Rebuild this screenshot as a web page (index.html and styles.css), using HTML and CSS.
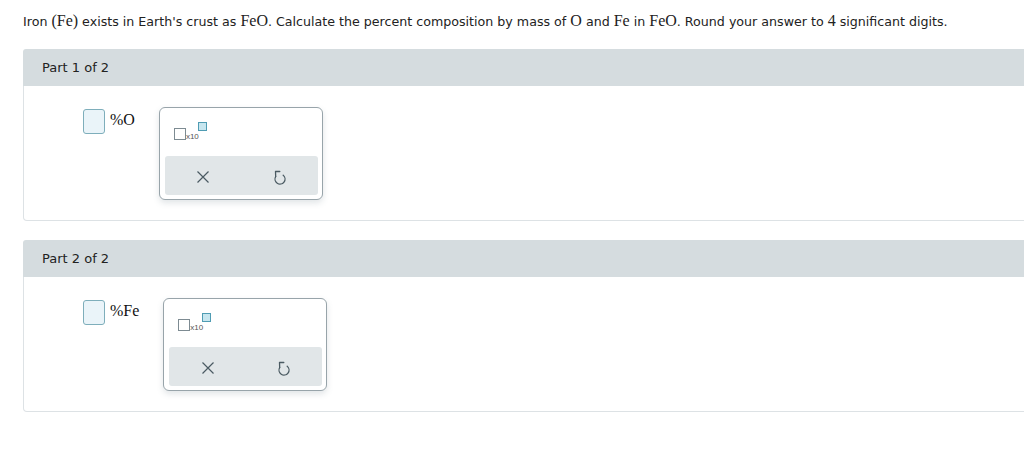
FILE: index.html
```html
<!DOCTYPE html>
<html>
<head>
<meta charset="utf-8">
<link rel="stylesheet" href="styles.css">
</head>
<body>
<p class="question">Iron <span class="m">(Fe)</span> exists in Earth's crust as <span class="m">FeO</span>. Calculate the percent composition by mass of <span class="m">O</span> and <span class="m">Fe</span> in <span class="m">FeO</span>. Round your answer to <span class="m">4</span> significant digits.</p>

<section class="part">
  <div class="part-head">Part 1 of 2</div>
  <div class="part-body">
    <div class="answer">
      <span class="box"></span>
      <span class="unit">%O</span>
    </div>
    <div class="pad">
      <div class="pad-tools">
        <span class="sq"></span><span class="x10">x10</span><span class="sup"></span>
      </div>
      <div class="pad-bar">
        <svg class="ic" width="14" height="14" viewBox="0 0 14 14"><path d="M1.5 1.5 L12.5 12.5 M12.5 1.5 L1.5 12.5" stroke="#4a5a62" stroke-width="1.2" fill="none"/></svg>
        <svg class="ic" width="14" height="16" viewBox="0 0 14 16"><path d="M2.7 7.5 A5 5 0 1 0 10.2 6.2" stroke="#4a5a62" stroke-width="1.3" fill="none" stroke-linecap="round"/><path d="M2.7 7.5 L2.5 2.5 L6.8 2.5" stroke="#4a5a62" stroke-width="1.3" fill="none" stroke-linejoin="round" stroke-linecap="round"/></svg>
      </div>
    </div>
  </div>
</section>

<section class="part">
  <div class="part-head">Part 2 of 2</div>
  <div class="part-body">
    <div class="answer">
      <span class="box"></span>
      <span class="unit">%Fe</span>
    </div>
    <div class="pad">
      <div class="pad-tools">
        <span class="sq"></span><span class="x10">x10</span><span class="sup"></span>
      </div>
      <div class="pad-bar">
        <svg class="ic" width="14" height="14" viewBox="0 0 14 14"><path d="M1.5 1.5 L12.5 12.5 M12.5 1.5 L1.5 12.5" stroke="#4a5a62" stroke-width="1.2" fill="none"/></svg>
        <svg class="ic" width="14" height="16" viewBox="0 0 14 16"><path d="M2.7 7.5 A5 5 0 1 0 10.2 6.2" stroke="#4a5a62" stroke-width="1.3" fill="none" stroke-linecap="round"/><path d="M2.7 7.5 L2.5 2.5 L6.8 2.5" stroke="#4a5a62" stroke-width="1.3" fill="none" stroke-linejoin="round" stroke-linecap="round"/></svg>
      </div>
    </div>
  </div>
</section>
</body>
</html>
```
FILE: styles.css
```css
html, body {
  margin: 0;
  padding: 0;
  background: #fff;
  overflow: hidden;
}
body {
  font-family: "DejaVu Sans", Verdana, sans-serif;
  font-size: 13px;
  color: #222;
  padding: 0 0 0 23px;
  width: 1040px;
}
.question {
  margin: 0;
  padding-top: 11px;
  height: 49px;
  box-sizing: border-box;
  line-height: 20px;
  font-size: 12.65px;
}
.m {
  font-family: "Liberation Serif", "Times New Roman", serif;
  font-size: 16px;
}
.part {
  margin-bottom: 19px;
}
.part-head {
  background: #d5dcdf;
  height: 37px;
  line-height: 37px;
  padding-left: 19px;
  border-radius: 3px 0 0 0;
}
.part-body {
  border: 1px solid #dde2e5;
  border-top: none;
  border-radius: 0 0 0 4px;
  height: 135px;
  display: flex;
  align-items: flex-start;
  padding: 21px 0 0 59px;
  box-sizing: border-box;
}
.answer {
  display: flex;
  align-items: flex-start;
  margin-top: 2px;
}
.box {
  width: 20px;
  height: 23px;
  background: #eaf4f9;
  border: 1px solid #7eaebb;
  border-radius: 3px;
}
.unit {
  font-family: "Liberation Serif", "Times New Roman", serif;
  font-size: 16px;
  color: #111;
  margin-left: 5px;
  line-height: 22px;
}
.pad {
  margin-left: 24px;
  width: 164px;
  height: 93px;
  box-sizing: border-box;
  border: 1px solid #98a4aa;
  border-radius: 6px;
  background: #fff;
  box-shadow: 0 3px 6px rgba(90, 110, 120, 0.18);
  padding: 0 4px 4px 5px;
  display: flex;
  flex-direction: column;
}
.pad-tools {
  height: 48px;
  display: flex;
  align-items: flex-start;
  padding: 14px 0 0 9px;
  box-sizing: border-box;
}
.sq {
  width: 10px;
  height: 10px;
  border: 1.5px solid #7d8b92;
  margin-top: 6px;
}
.x10 {
  font-family: "Liberation Sans", Arial, sans-serif;
  font-size: 8px;
  color: #555;
  margin-top: 11px;
  line-height: 8px;
}
.sup {
  width: 7px;
  height: 7px;
  background: #c7e6ef;
  border: 1.5px solid #4f9cb3;
  margin-left: -1px;
}
.pad-bar {
  flex: 1;
  background: #e1e6e8;
  border-radius: 3px;
  display: flex;
  justify-content: space-around;
  align-items: center;
  padding-top: 2px;
}
.ic {
  display: block;
}
```
